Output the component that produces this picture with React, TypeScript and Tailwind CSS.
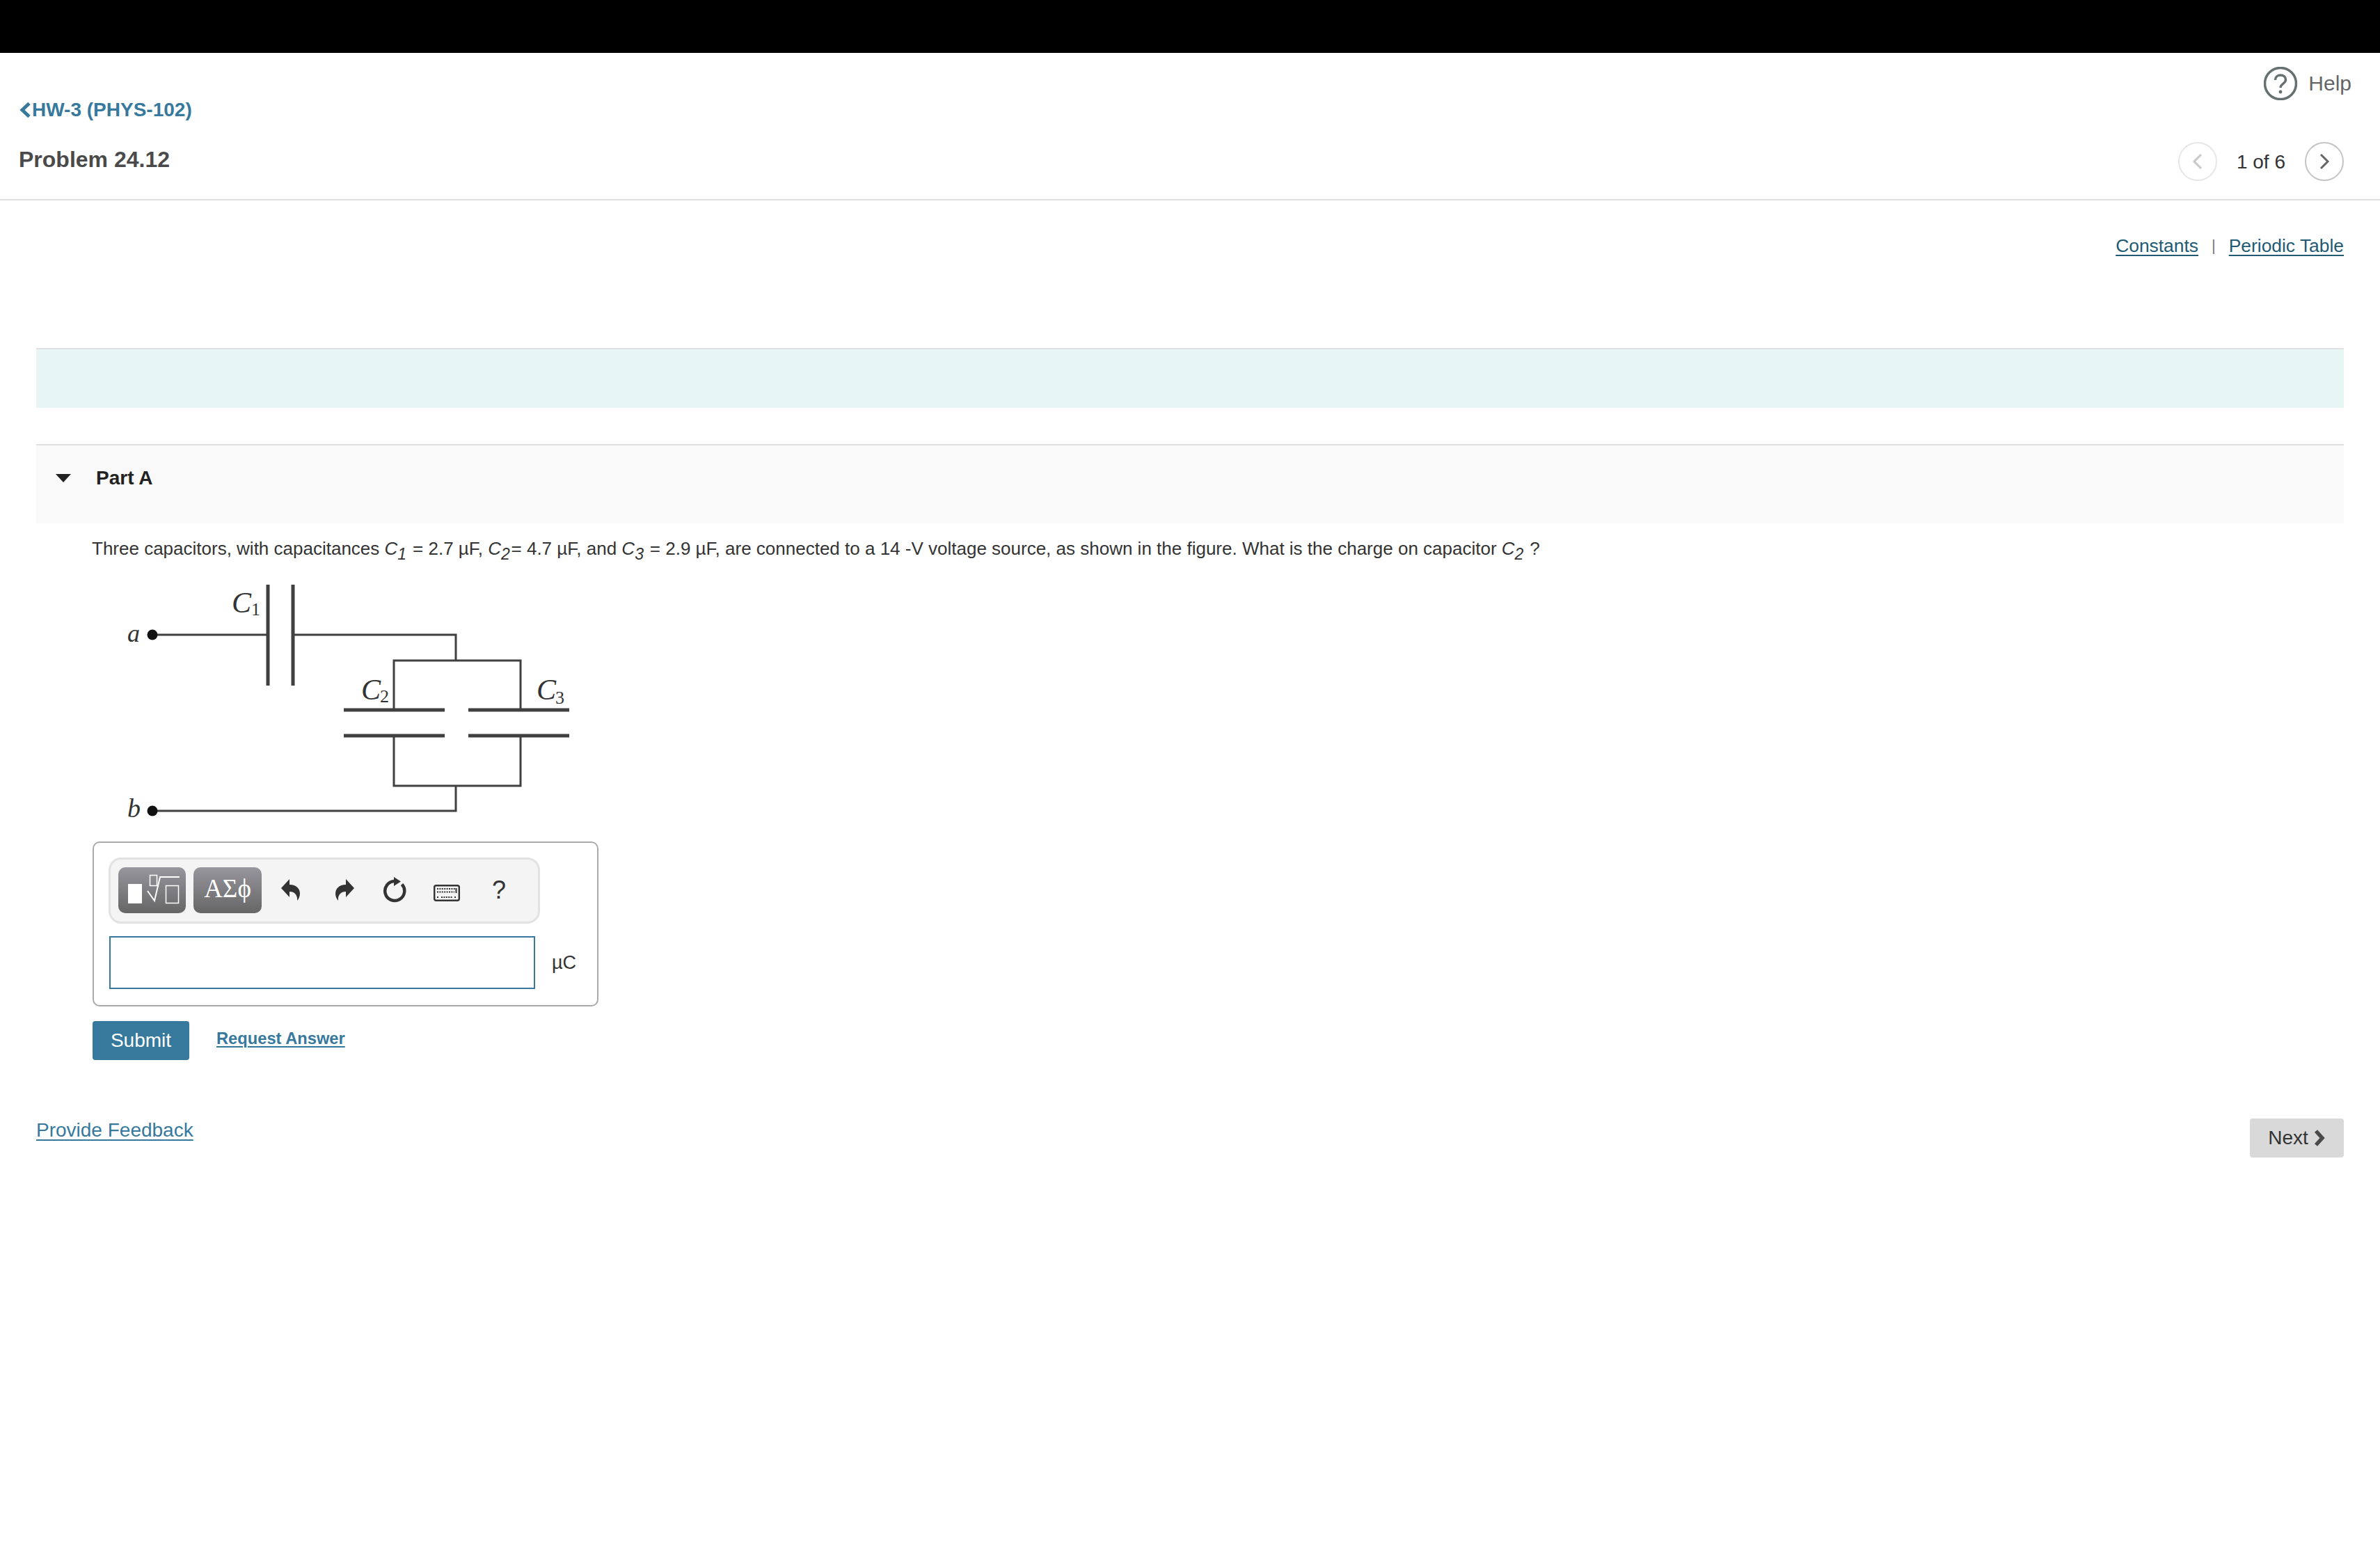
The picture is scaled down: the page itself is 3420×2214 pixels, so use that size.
import React from "react";

function Sym({ name, sub }: { name: string; sub: string }) {
  return (
    <span className="italic pr-[1.7px]">
      {name}
      <sub className="text-[23px] leading-none relative top-[7px] align-baseline">{sub}</sub>
    </span>
  );
}

function Circuit() {
  return (
    <svg width="700" height="370" viewBox="150 820 700 370" className="block" fill="none" stroke="#404040">
      <path d="M219 911H385M421 911H655V948M566 1019V948H748V1019M566 1056V1128H748V1056M655 1128V1164H219" strokeWidth="3" />
      <path d="M385 839V984M421 839V984" strokeWidth="5" />
      <path d="M494 1019H639M673 1019H818M494 1056H639M673 1056H818" strokeWidth="5" />
      <circle cx="219" cy="911" r="7.5" fill="#111" stroke="none" />
      <circle cx="219" cy="1164" r="7.5" fill="#111" stroke="none" />
      <g fill="#333" stroke="none" fontFamily="Liberation Serif" fontSize="42">
        <text x="183" y="921" fontStyle="italic" fontSize="36">a</text>
        <text x="183" y="1173" fontStyle="italic" fontSize="38">b</text>
        <text x="333" y="879" fontStyle="italic">C</text>
        <text x="361" y="883" fontSize="26">1</text>
        <text x="519" y="1004" fontStyle="italic">C</text>
        <text x="546" y="1008" fontSize="26">2</text>
        <text x="771" y="1004" fontStyle="italic">C</text>
        <text x="798" y="1010" fontSize="26">3</text>
      </g>
    </svg>
  );
}

function MathIcon() {
  return (
    <svg width="97" height="66" viewBox="0 0 97 66" fill="none" stroke="#fff">
      <rect x="14" y="24" width="20" height="28" fill="#fff" stroke="none" />
      <rect x="45.5" y="11.5" width="10" height="15" strokeWidth="1.5" />
      <path d="M42 34L52 48L60 14H88" strokeWidth="2" />
      <rect x="68.5" y="26.5" width="18" height="25" strokeWidth="1.5" />
    </svg>
  );
}

function Keyboard() {
  return (
    <svg width="38" height="24" viewBox="0 0 38 24" fill="none">
      <rect x="1.2" y="1.2" width="35.6" height="21.6" rx="2.5" stroke="#333" strokeWidth="2.4" />
      <path d="M5 6H31M5 10.5H30M5 18H7M11 18H27M30 18H33" stroke="#333" strokeWidth="2" strokeDasharray="2 1.4" />
      <path d="M32.5 5V12" stroke="#333" strokeWidth="2" />
    </svg>
  );
}

export default function App() {
  return (
    <div className="min-h-screen bg-white font-['Liberation_Sans',sans-serif] text-[#333]">
      <div className="h-[76px] bg-black" />

      {/* Header */}
      <header className="h-[212px] flex justify-between border-b-2 border-[#e0e0e0]">
        <div className="pl-[27px] pt-[63px]">
          <a className="flex items-center text-[28px] leading-[38px] font-bold text-[#37799c]">
            <svg width="18" height="24" viewBox="0 0 18 24" fill="none" className="mr-px">
              <path d="M15 2.5L5 12L15 21.5" stroke="#37799c" strokeWidth="5" />
            </svg>
            HW-3 (PHYS-102)
          </a>
          <h1 className="mt-[32px] text-[32px] leading-[40px] font-bold text-[#4a4a4a]">Problem 24.12</h1>
        </div>
        <div className="flex flex-col items-end pr-[52px] pt-[20px]">
          <div className="flex items-center gap-[16px] -mr-[11px] text-[30px] leading-[48px] text-[#666]">
            <svg width="48" height="48" viewBox="0 0 48 48" fill="none">
              <circle cx="24" cy="24" r="22.5" stroke="#667070" strokeWidth="3.5" />
              <path d="M16.5 19C16.5 14.5 20 12 24 12C28.5 12 31.5 14.8 31.5 18.5C31.5 24 24 24.5 24 30" stroke="#667070" strokeWidth="3.5" />
              <circle cx="24" cy="36" r="2.4" fill="#667070" />
            </svg>
            Help
          </div>
          <div className="mt-[60px] flex items-center">
            <div className="w-[56px] h-[56px] rounded-full border-2 border-[#e6e6e6] flex items-center justify-center">
              <svg width="16" height="24" viewBox="0 0 16 24" fill="none">
                <path d="M13 2L3 12L13 22" stroke="#c8c8c8" strokeWidth="3" />
              </svg>
            </div>
            <span className="mx-[28px] text-[28px] leading-[40px] text-[#333] relative top-[1px]">1 of 6</span>
            <div className="w-[56px] h-[56px] rounded-full border-2 border-[#c4c4c4] flex items-center justify-center">
              <svg width="16" height="24" viewBox="0 0 16 24" fill="none">
                <path d="M3 2L13 12L3 22" stroke="#666" strokeWidth="3" />
              </svg>
            </div>
          </div>
        </div>
      </header>

      <main className="px-[52px]">
        {/* Constants links */}
        <div className="mt-[48px] flex justify-end items-center text-[26.4px] leading-[34px] text-[#215a72]">
          <a className="underline underline-offset-[4px]">Constants</a>
          <span className="mx-[19px] text-[#777] text-[22px]">|</span>
          <a className="underline underline-offset-[4px]">Periodic Table</a>
        </div>

        {/* Teal banner */}
        <div className="mt-[130px] h-[86px] bg-[#e7f5f5] border-t-2 border-[#e0e2e2]" />

        {/* Part A */}
        <div className="mt-[52px] h-[114px] bg-[#f9f9f9] border-t-2 border-[#e0e0e0] flex items-center pb-[18px]">
          <svg width="22" height="14" viewBox="0 0 22 14" className="ml-[28px]">
            <path d="M0 1H22L11 13Z" fill="#222" />
          </svg>
          <span className="ml-[36px] text-[28px] font-bold text-[#222]">Part A</span>
        </div>

        <div className="pl-[80px]">
          <p className="mt-[20px] text-[26px] leading-[32px] whitespace-nowrap text-[#333]">
            Three capacitors, with capacitances <Sym name="C" sub="1" /> = 2.7 µF, <Sym name="C" sub="2" />= 4.7 µF, and{" "}
            <Sym name="C" sub="3" /> = 2.9 µF, are connected to a 14 -V voltage source, as shown in the figure. What is the
            charge on capacitor <Sym name="C" sub="2" /> ?
          </p>

          <div className="ml-[18px] mt-[17px]">
            <Circuit />
          </div>

          {/* Answer box */}
          <div className="ml-[1px] mt-[18px] w-[727px] h-[237px] border-2 border-[#aaa] rounded-[10px] pl-[21px] pt-[21px]">
            <div className="w-[620px] h-[95px] bg-[#f4f4f4] border-[3px] border-[#e2e2e2] rounded-[18px] flex items-center pl-[11px] pb-[2px]">
              <button className="w-[97px] h-[66px] rounded-[10px] bg-gradient-to-b from-[#98969e] to-[#666]">
                <MathIcon />
              </button>
              <button className="ml-[11px] w-[98px] h-[66px] pb-[4px] rounded-[10px] bg-gradient-to-b from-[#98969e] to-[#666] text-white text-[37px] font-['Liberation_Serif',serif] leading-none">
                ΑΣϕ
              </button>
              <svg width="27" height="31" viewBox="0 0 27 31" className="ml-[28px]">
                <path d="M0 13L12 0V8C22 8 27 14 27 21C27 25 25 29 23 31C24 24 20 18 12 18V26Z" fill="#333" />
              </svg>
              <svg width="27" height="31" viewBox="0 0 27 31" className="ml-[51px]">
                <path d="M27 13L15 0V8C5 8 0 14 0 21C0 25 2 29 4 31C3 24 7 18 15 18V26Z" fill="#333" />
              </svg>
              <svg width="34" height="38" viewBox="0 0 34 38" fill="none" className="ml-[41px]">
                <path d="M17 6A14 14 0 1 0 27.5 10.5" stroke="#333" strokeWidth="4.5" />
                <path d="M16 0L26 6.5L16 13Z" fill="#333" />
              </svg>
              <span className="ml-[39px] relative top-[4px] flex">
                <Keyboard />
              </span>
              <span className="ml-[46px] text-[36px] leading-none text-[#333]">?</span>
            </div>
            <div className="mt-[18px] flex items-center">
              <div className="w-[612px] h-[76px] ml-[1px] border-2 border-[#37799c] bg-white" />
              <span className="ml-[24px] text-[27px] text-[#333]">µC</span>
            </div>
          </div>

          <div className="ml-[1px] mt-[21px] flex items-center">
            <button className="w-[139px] h-[56px] rounded-[4px] bg-[#37799c] text-white text-[28px]">Submit</button>
            <a className="ml-[39px] relative -top-[2px] text-[23.7px] font-bold text-[#37799c] underline underline-offset-[3px]">
              Request Answer
            </a>
          </div>
        </div>

        {/* Footer row */}
        <div className="mt-[84px] flex justify-between items-start">
          <a className="text-[28px] leading-[34px] text-[#37799c] underline underline-offset-[4px]">Provide Feedback</a>
          <button className="w-[135px] h-[56px] rounded-[4px] bg-[#d9d9d9] text-[28px] text-[#333] flex items-center justify-center gap-[7px]">
            Next
            <svg width="18" height="26" viewBox="0 0 18 26" fill="none">
              <path d="M4 3L13 13L4 23" stroke="#4a4a4a" strokeWidth="5.5" />
            </svg>
          </button>
        </div>
      </main>
    </div>
  );
}
